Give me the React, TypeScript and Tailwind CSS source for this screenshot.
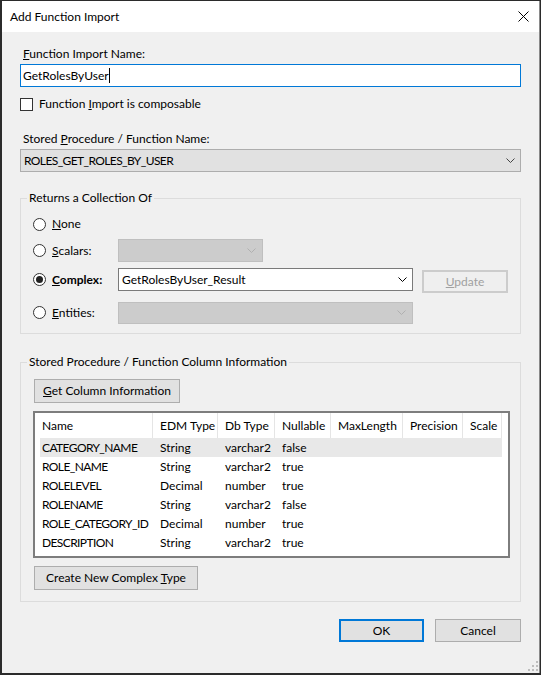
import React from "react";

const Chevron = ({ color = "#000" }: { color?: string }) => (
  <svg width="9" height="5" viewBox="0 0 9 5" className="shrink-0">
    <polyline points="0.5,0.5 4.5,4.5 8.5,0.5" fill="none" stroke={color} strokeWidth="1" />
  </svg>
);

const Radio = ({ checked = false }: { checked?: boolean }) => (
  <div className="w-[13px] h-[13px] rounded-full border border-[#333] bg-white flex items-center justify-center shrink-0">
    {checked && <div className="w-[7px] h-[7px] rounded-full bg-[#222]" />}
  </div>
);

const headers = [
  "Name",
  "EDM Type",
  "Db Type",
  "Nullable",
  "MaxLength",
  "Precision",
  "Scale",
];

const rows = [
  ["CATEGORY_NAME", "String", "varchar2", "false"],
  ["ROLE_NAME", "String", "varchar2", "true"],
  ["ROLELEVEL", "Decimal", "number", "true"],
  ["ROLENAME", "String", "varchar2", "false"],
  ["ROLE_CATEGORY_ID", "Decimal", "number", "true"],
  ["DESCRIPTION", "String", "varchar2", "true"],
];

export default function App() {
  return (
    <div className="w-[541px] h-[675px] bg-[#2b2b2b] pt-[1px] pl-[2px] overflow-hidden font-['Lato',sans-serif] text-[12px] leading-[16px] text-black">
      <div className="relative w-[538px] h-[672px] bg-[#f0f0f0] border-r border-[#8a8a8a] flex flex-col">
        {/* title bar */}
        <div className="h-[31px] bg-white flex items-center justify-between pl-[8px] pr-[10px] shrink-0">
          <span>Add Function Import</span>
          <svg width="11" height="11" viewBox="0 0 11 11">
            <line x1="0.5" y1="0.5" x2="10.5" y2="10.5" stroke="#000" strokeWidth="1" />
            <line x1="10.5" y1="0.5" x2="0.5" y2="10.5" stroke="#000" strokeWidth="1" />
          </svg>
        </div>

        <div className="pl-[18px] pr-[18px] pt-[14px] flex flex-col">
          <div className="pl-[3px]">
            <u>F</u>unction Import Name:
          </div>
          <div className="mt-[2px] h-[23px] bg-white border border-[#0078d7] flex items-center pl-[2px]">
            GetRolesByUser
            <span className="inline-block w-px h-[15px] bg-black" />
          </div>

          <div className="mt-[9px] h-[16px] flex items-center">
            <div className="w-[13px] h-[13px] bg-white border border-[#333]" />
            <span className="ml-[6px]">
              Function <u>I</u>mport is composable
            </span>
          </div>

          <div className="mt-[19px] pl-[3px]">
            Stored <u>P</u>rocedure / Function Name:
          </div>
          <div className="mt-[2px] h-[23px] bg-[#e1e1e1] border border-[#adadad] flex items-center justify-between pl-[3px] pr-[5px]">
            <span className="tracking-[-0.6px]">ROLES_GET_ROLES_BY_USER</span>
            <Chevron color="#444" />
          </div>

          {/* group 1 */}
          <fieldset className="mt-[18px] border border-[#dcdcdc] pl-[12px] pr-[12px] pb-[9px] min-w-0">
            <legend className="-ml-[6px] px-[2px]">Returns a Collection Of</legend>
            <div className="mt-[10px] h-[16px] flex items-center">
              <Radio />
              <span className="ml-[6px]">
                <u>N</u>one
              </span>
            </div>
            <div className="mt-[7px] h-[23px] flex items-center">
              <Radio />
              <span className="ml-[6px] w-[66px]">
                <u>S</u>calars:
              </span>
              <div className="w-[145px] h-[23px] bg-[#cccccc] border border-[#bfbfbf] flex items-center justify-end pr-[6px]">
                <Chevron color="#b0b0b0" />
              </div>
            </div>
            <div className="mt-[6px] h-[23px] flex items-center">
              <Radio checked />
              <span className="ml-[6px] w-[66px] font-bold">
                <u>C</u>omplex:
              </span>
              <div className="w-[295px] h-[23px] bg-white border border-[#7a7a7a] flex items-center justify-between pl-[3px] pr-[5px]">
                <span>GetRolesByUser_Result</span>
                <Chevron />
              </div>
              <div className="ml-[9px] mt-[4px] w-[86px] h-[23px] border-2 border-[#cccccc] bg-[#efefef] text-[#a0a0a0] flex items-center justify-center">
                <span>
                  <u>U</u>pdate
                </span>
              </div>
            </div>
            <div className="mt-[10px] h-[23px] flex items-center">
              <Radio />
              <span className="ml-[6px] w-[66px]">
                <u>E</u>ntities:
              </span>
              <div className="w-[295px] h-[22px] bg-[#cccccc] border border-[#bfbfbf] flex items-center justify-end pr-[6px]">
                <Chevron color="#b0b0b0" />
              </div>
            </div>
          </fieldset>

          {/* group 2 */}
          <fieldset className="mt-[20px] border border-[#dcdcdc] pl-[12px] pr-[11px] pb-[11px] min-w-0">
            <legend className="-ml-[6px] px-[2px]">Stored Procedure / Function Column Information</legend>
            <div className="mt-[9px] ml-[1px] w-[146px] h-[24px] bg-[#e1e1e1] border border-[#adadad] flex items-center justify-center">
              <span>
                <u>G</u>et Column Information
              </span>
            </div>

            <div className="mt-[8px] w-[477px] h-[147px] bg-white border-2 border-[#7d7d7d]">
              <div className="grid grid-cols-[118px_65px_57px_56px_72px_60px_39px] w-[467px] h-[25px]">
                {headers.map((h) => (
                  <div key={h} className="border-r border-[#e5e5e5] pl-[7px] flex items-center">
                    {h}
                  </div>
                ))}
              </div>
              <div className="pl-[5px]">
                {rows.map((r, i) => (
                  <div
                    key={r[0]}
                    className={`grid grid-cols-[113px_65px_57px_56px_72px_60px_39px] w-[462px] h-[19px] items-center ${
                      i === 0 ? "bg-[#e8e8e8]" : ""
                    }`}
                  >
                    <div className="pl-[2px] whitespace-nowrap tracking-[-0.6px]">{r[0]}</div>
                    <div className="pl-[7px]">{r[1]}</div>
                    <div className="pl-[7px]">{r[2]}</div>
                    <div className="pl-[7px]">{r[3]}</div>
                    <div />
                    <div />
                    <div />
                  </div>
                ))}
              </div>
            </div>

            <div className="mt-[8px] ml-[1px] w-[164px] h-[24px] bg-[#e1e1e1] border border-[#adadad] flex items-center justify-center">
              <span>
                Create New Complex <u>T</u>ype
              </span>
            </div>
          </fieldset>

          <div className="mt-[17px] flex justify-end gap-[11px]">
            <div className="w-[85px] h-[23px] bg-[#e1e1e1] border-2 border-[#0078d7] flex items-center justify-center">
              OK
            </div>
            <div className="w-[86px] h-[23px] bg-[#e1e1e1] border border-[#adadad] flex items-center justify-center">
              Cancel
            </div>
          </div>
        </div>

        <svg width="10" height="10" viewBox="0 0 10 10" className="absolute right-[1px] bottom-[2px]">
          <rect x="8" y="0" width="2" height="2" fill="#bdbdbd" />
          <rect x="4" y="4" width="2" height="2" fill="#bdbdbd" />
          <rect x="8" y="4" width="2" height="2" fill="#bdbdbd" />
          <rect x="0" y="8" width="2" height="2" fill="#bdbdbd" />
          <rect x="4" y="8" width="2" height="2" fill="#bdbdbd" />
          <rect x="8" y="8" width="2" height="2" fill="#bdbdbd" />
        </svg>
      </div>
    </div>
  );
}
